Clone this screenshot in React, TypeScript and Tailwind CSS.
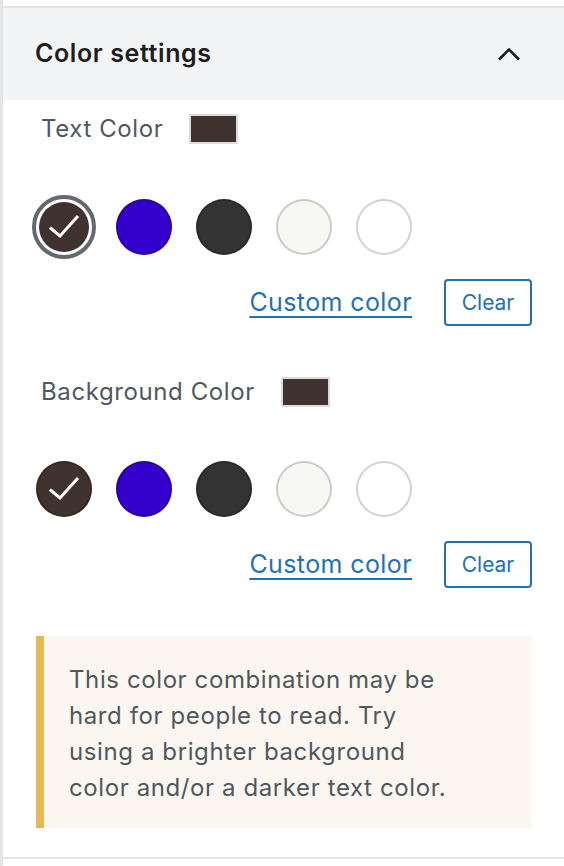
const swatches = [
  { color: '#40332f', ring: true },
  { color: '#3300cc' },
  { color: '#333333' },
  { color: '#f7f8f4' },
  { color: '#ffffff' },
]

function Check() {
  return (
    <svg width="32" height="26" viewBox="0 0 32 26" fill="none" className="absolute">
      <path d="M3 14.5 L12 22 L29 3" stroke="white" strokeWidth="3" strokeLinecap="square" />
    </svg>
  )
}

function Palette({ ringed }: { ringed: boolean }) {
  return (
    <div className="flex h-[64px] items-center gap-4">
      {swatches.map((s, i) => (
        <div key={i} className="flex h-[64px] w-[64px] items-center justify-center">
          {i === 0 && ringed ? (
            <div className="relative flex h-[64px] w-[64px] items-center justify-center rounded-full border-[4px] border-[#646970] bg-white">
              <div className="h-[50px] w-[50px] rounded-full" style={{ backgroundColor: s.color }} />
              <Check />
            </div>
          ) : (
            <div
              className="relative flex h-[56px] w-[56px] items-center justify-center rounded-full shadow-[inset_0_0_0_2px_rgba(0,0,0,0.18)]"
              style={{ backgroundColor: s.color }}
            >
              {i === 0 && <Check />}
            </div>
          )}
        </div>
      ))}
    </div>
  )
}

function LabelRow({ label, mt }: { label: string, mt: string }) {
  return (
    <div className={`flex h-[32px] items-center pl-[9px] ${mt}`}>
      <span className="text-[24px] tracking-[0.6px] text-[#50575e]">{label}</span>
      <span className="ml-[26px] h-[30px] w-[49px] border-2 border-[#dcdcde] bg-[#40332f]" />
    </div>
  )
}

function CustomRow() {
  return (
    <div className="mt-[20px] flex h-[47px] items-center justify-end gap-8">
      <a className="text-[25px] tracking-[0.4px] text-[#2271b1] underline decoration-[2px] underline-offset-[5px]">Custom color</a>
      <button className="h-[47px] w-[88px] rounded-[4px] border-2 border-[#2271b1] text-[21px] text-[#2271b1]">Clear</button>
    </div>
  )
}

export default function App() {
  return (
    <div className="flex h-[866px] w-full flex-col border-l-[3px] border-[#e2e4e7] bg-white font-['Inter',sans-serif]">
      <div className="mt-[6px] flex h-[94px] items-center justify-between border-t-2 border-[#e2e4e7] bg-[#f3f4f5] pl-[32px] pr-[43px]">
        <h2 className="text-[25px] font-semibold tracking-[0.6px] text-[#1e1e1e]">Color settings</h2>
        <svg width="24" height="14" viewBox="0 0 24 14" fill="none">
          <path d="M2 12.5 L12 2.5 L22 12.5" stroke="#1e1e1e" strokeWidth="2.6" />
        </svg>
      </div>

      <div className="flex flex-col pl-[29px] pr-[32px]">
        <LabelRow label="Text Color" mt="mt-[13px]" />
        <div className="mt-[50px]">
          <Palette ringed />
        </div>
        <CustomRow />

        <LabelRow label="Background Color" mt="mt-[50px]" />
        <div className="mt-[49px]">
          <Palette ringed={false} />
        </div>
        <CustomRow />

        <div className="ml-[4px] mt-[48px] border-l-[8px] border-[#e6b956] bg-[#fbf7f0] pb-[22px] pl-[25px] pr-4 pt-[26px]">
          <p className="text-[24px] leading-[36px] tracking-[0.6px] text-[#50575e]">
            This color combination may be
            <br />
            hard for people to read. Try
            <br />
            using a brighter background
            <br />
            color and/or a darker text color.
          </p>
        </div>
      </div>

      <div className="mt-[29px] border-t-2 border-[#e2e4e7]" />
    </div>
  )
}
